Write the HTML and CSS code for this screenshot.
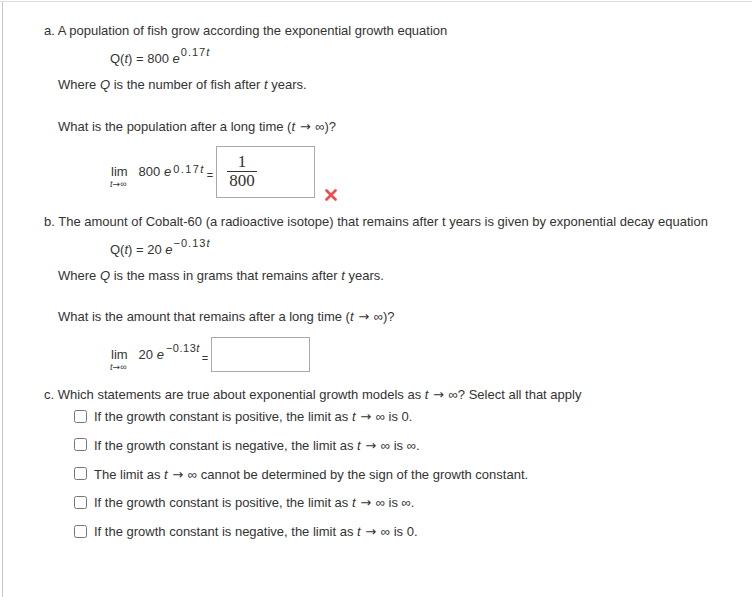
FILE: index.html
```html
<!DOCTYPE html>
<html>
<head>
<meta charset="utf-8">
<link rel="stylesheet" href="styles.css">
</head>
<body>
<div class="frame">
  <div class="panel">
    <p class="part part-a">a. A population of fish grow according the exponential growth equation</p>
    <p class="eq eq-a">Q(<i>t</i>) = 800 <i>e</i><span class="sup">0.17<i>t</i></span></p>
    <p class="txt where-a">Where <i>Q</i> is the number of fish after <i>t</i> years.</p>
    <p class="txt what-a">What is the population after a long time (<i>t</i> <span class="ar">→</span> ∞)?</p>
    <div class="limrow lim-a">
      <div class="lim"><span class="limw">lim</span><span class="limsub"><i>t</i><span class="ar-s">→</span>∞</span></div>
      <span class="expr">800 <i>e</i><span class="sup sup-l1">0.17<i>t</i></span></span><span class="eqs">=</span>
      <div class="box box-a">
        <div class="frac"><span class="num">1</span><span class="den">800</span></div>
      </div>
      <svg class="wrong" width="12" height="12" viewBox="0 0 12 12"><path d="M1.5 1.5 L10.5 10.5 M10.5 1.5 L1.5 10.5" stroke="#ee4b4f" stroke-width="2.6" stroke-linecap="round"/></svg>
    </div>
    <p class="part part-b">b. The amount of Cobalt-60 (a radioactive isotope) that remains after t years is given by exponential decay equation</p>
    <p class="eq eq-b">Q(<i>t</i>) = 20 <i>e</i><span class="sup">−0.13<i>t</i></span></p>
    <p class="txt where-b">Where <i>Q</i> is the mass in grams that remains after <i>t</i> years.</p>
    <p class="txt what-b">What is the amount that remains after a long time (<i>t</i> <span class="ar">→</span> ∞)?</p>
    <div class="limrow lim-b">
      <div class="lim"><span class="limw">lim</span><span class="limsub"><i>t</i><span class="ar-s">→</span>∞</span></div>
      <span class="expr">20 <i>e</i><span class="sup sup-l2">−0.13<i>t</i></span></span><span class="eqs">=</span>
      <div class="box box-b"></div>
    </div>
    <p class="part part-c">c. Which statements are true about exponential growth models as <i>t</i> <span class="ar">→</span> ∞? Select all that apply</p>
    <ul class="opts">
      <li class="opt"><span class="cb"></span><span>If the growth constant is positive, the limit as <i>t</i> <span class="ar">→</span> ∞ is 0.</span></li>
      <li class="opt"><span class="cb"></span><span>If the growth constant is negative, the limit as <i>t</i> <span class="ar">→</span> ∞ is ∞.</span></li>
      <li class="opt"><span class="cb"></span><span>The limit as <i>t</i> <span class="ar">→</span> ∞ cannot be determined by the sign of the growth constant.</span></li>
      <li class="opt"><span class="cb"></span><span>If the growth constant is positive, the limit as <i>t</i> <span class="ar">→</span> ∞ is ∞.</span></li>
      <li class="opt"><span class="cb"></span><span>If the growth constant is negative, the limit as <i>t</i> <span class="ar">→</span> ∞ is 0.</span></li>
    </ul>
  </div>
</div>
</body>
</html>
```
FILE: styles.css
```css
html, body {
  margin: 0;
  padding: 0;
  background: #fff;
  height: 100%;
}
body {
  font-family: "Liberation Sans", Arial, sans-serif;
  font-size: 13px;
  color: #333;
}
.frame {
  margin-top: 1px;
  border-top: 1px solid #dedede;
  height: calc(100% - 2px);
}
.panel {
  margin-left: 2px;
  border-left: 1px solid #c8c8c8;
  height: 100%;
  box-sizing: border-box;
  padding: 21px 0 0 41px;
}
p {
  margin: 0;
  line-height: 16px;
}
.ar {
  font-family: "DejaVu Sans", sans-serif;
  font-size: 13px;
  line-height: 0;
  margin: 0 1px;
}
.ar-s {
  font-family: "DejaVu Sans", sans-serif;
  font-size: 9px;
}
.eq {
  margin-left: 66px;
}
.txt {
  margin-left: 14px;
}
.sup {
  font-size: 11px;
  letter-spacing: 1px;
  line-height: 0;
  vertical-align: 7px;
  margin-left: 1px;
}
.sup-l1 {
  vertical-align: 3px;
  letter-spacing: 1.4px;
  margin-left: 2px;
}
.sup-l2 {
  vertical-align: 7px;
  letter-spacing: 0.5px;
  margin-left: 2px;
}
.eq-a { margin-top: 12px; }
.where-a { margin-top: 10px; }
.what-a { margin-top: 26px; }
.part-b { margin-top: 16px; }
.eq-b { margin-top: 12px; }
.where-b { margin-top: 10px; }
.what-b { margin-top: 25px; }
.part-c { margin-top: 15px; }

.limrow {
  display: flex;
  align-items: center;
  margin-left: 67px;
}
.lim-a { margin-top: 11px; }
.lim-b { margin-top: 12px; }
.lim {
  display: flex;
  flex-direction: column;
  align-items: center;
  margin-bottom: -10px;
}
.limw {
  line-height: 14px;
}
.limsub {
  font-size: 9px;
  line-height: 10px;
  margin-left: -2px;
}
.expr {
  margin-left: 11px;
  line-height: 16px;
}
.eqs {
  margin-left: 2px;
  font-size: 11px;
  position: relative;
  top: 3px;
}
.box {
  margin-left: 3px;
  width: 99px;
  box-sizing: border-box;
  border: 1px solid #a9a9a9;
  display: flex;
  align-items: center;
  padding-left: 10px;
}
.box-a { height: 52px; }
.box-b { height: 35px; }
.frac {
  display: flex;
  flex-direction: column;
  align-items: center;
  font-family: "Liberation Serif", "Times New Roman", serif;
  font-size: 17px;
  color: #333;
}
.num {
  line-height: 14px;
  padding: 0 1px 2px;
  border-bottom: 1px solid #333;
  width: 28px;
  text-align: center;
}
.den {
  line-height: 17px;
}
.wrong {
  align-self: flex-end;
  margin-left: 10px;
  margin-bottom: -3px;
}
.opts {
  list-style: none;
  margin: 6px 0 0 0;
  padding: 0 0 0 30px;
  display: flex;
  flex-direction: column;
  gap: 12.75px;
}
.opt {
  display: flex;
  align-items: flex-start;
  line-height: 16px;
}
.cb {
  width: 13px;
  height: 13px;
  box-sizing: border-box;
  border: 1px solid #767676;
  border-radius: 2.5px;
  margin-right: 7px;
  margin-top: 0.5px;
  flex: none;
}
```
